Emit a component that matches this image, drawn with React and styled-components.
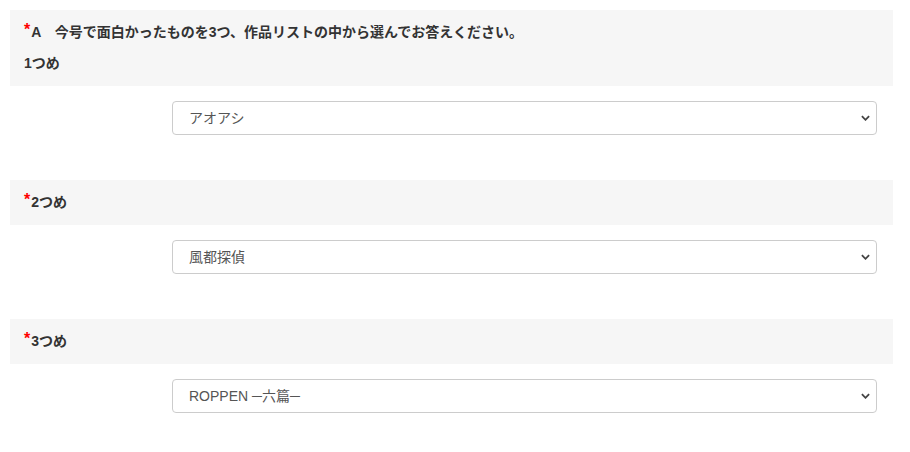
import React from "react";
import styled, { createGlobalStyle } from "styled-components";

const questions = [
  {
    title: "A　今号で面白かったものを3つ、作品リストの中から選んでお答えください。",
    label: "1つめ",
    value: "アオアシ"
  },
  { label: "2つめ", value: "風都探偵" },
  { label: "3つめ", value: "ROPPEN ─六篇─" }
];

export default function App() {
  return (
    <>
      <GlobalStyle />
      <SForm>
        {questions.map((q, i) => (
          <SBlock key={i}>
            <SHeader>
              {q.title ? (
                <>
                  <SLabel>
                    <SRequired>*</SRequired>
                    {q.title}
                  </SLabel>
                  <SLabel>{q.label}</SLabel>
                </>
              ) : (
                <SLabel>
                  <SRequired>*</SRequired>
                  {q.label}
                </SLabel>
              )}
            </SHeader>
            <SFieldRow>
              <SSelectWrap>
                <SSelect defaultValue={q.value}>
                  <option>{q.value}</option>
                </SSelect>
                <SChevron viewBox="0 0 10 6">
                  <path d="M1 1l4 4 4-4" />
                </SChevron>
              </SSelectWrap>
            </SFieldRow>
          </SBlock>
        ))}
      </SForm>
    </>
  );
}

const GlobalStyle = createGlobalStyle`
  body {
    margin: 0;
    background: #fff;
    font-family: "Liberation Sans", "Noto Sans CJK JP", sans-serif;
    color: #333;
  }
`;

const SForm = styled.div`
  width: 883px;
  padding: 10px 0 0 10px;
  display: flex;
  flex-direction: column;
  gap: 45px;
`;

const SBlock = styled.div`
  display: flex;
  flex-direction: column;
  gap: 15px;
`;

const SHeader = styled.div`
  background: #f6f6f6;
  padding: 12px 14px;
  display: flex;
  flex-direction: column;
  gap: 10px;
`;

const SLabel = styled.div`
  height: 21px;
  font-size: 14px;
  font-weight: bold;
  line-height: 21px;
  color: #333;
  white-space: nowrap;
`;

const SRequired = styled.span`
  display: inline-block;
  color: #f00;
  font-size: 16px;
  line-height: 10px;
  vertical-align: top;
  margin: 3px 1px 0 0;
`;

const SFieldRow = styled.div`
  padding: 0 16px 0 162px;
`;

const SSelectWrap = styled.div`
  position: relative;
`;

const SSelect = styled.select`
  appearance: none;
  -webkit-appearance: none;
  display: block;
  width: 100%;
  height: 34px;
  padding: 0 30px 0 16px;
  border: 1px solid #ccc;
  border-radius: 4px;
  background: #fff;
  font-family: "Liberation Sans", "Noto Sans CJK JP", sans-serif;
  font-size: 14px;
  color: #555;
  outline: none;
`;

const SChevron = styled.svg`
  position: absolute;
  right: 7px;
  top: 14px;
  width: 9px;
  height: 6px;
  fill: none;
  stroke: #444;
  stroke-width: 2;
  pointer-events: none;
`;
